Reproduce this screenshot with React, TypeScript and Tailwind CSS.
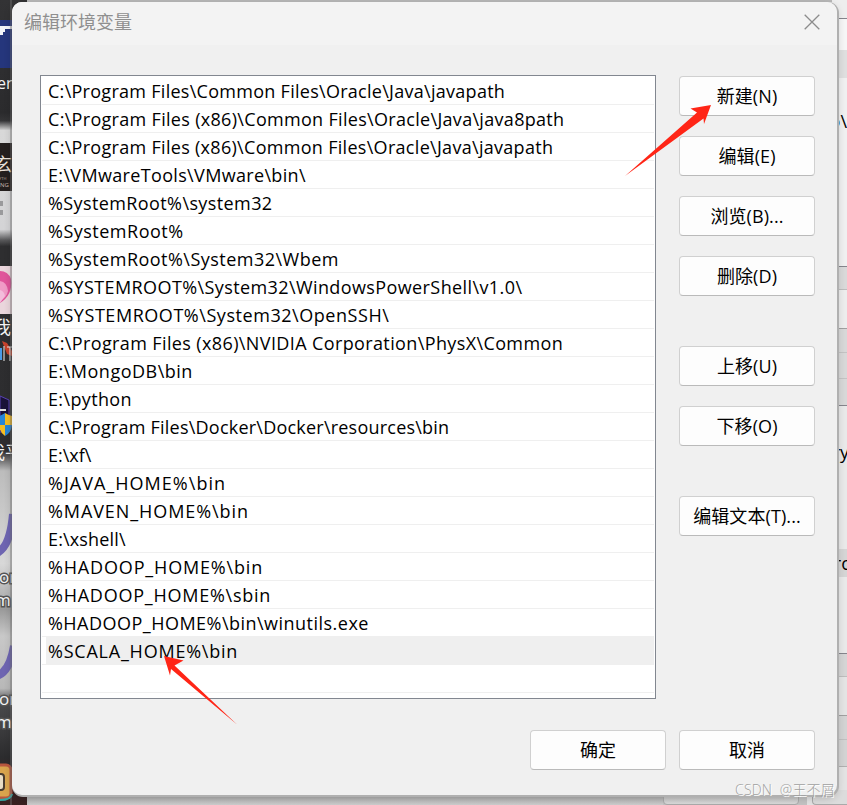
const paths = [
  { path: "C:\\Program Files\\Common Files\\Oracle\\Java\\javapath", tracking: 0.28 },
  { path: "C:\\Program Files (x86)\\Common Files\\Oracle\\Java\\java8path", tracking: 0.31 },
  { path: "C:\\Program Files (x86)\\Common Files\\Oracle\\Java\\javapath", tracking: 0.3 },
  { path: "E:\\VMwareTools\\VMware\\bin\\", tracking: 0.34 },
  { path: "%SystemRoot%\\system32", tracking: 0.4 },
  { path: "%SystemRoot%", tracking: 0.5 },
  { path: "%SystemRoot%\\System32\\Wbem", tracking: 0.48 },
  { path: "%SYSTEMROOT%\\System32\\WindowsPowerShell\\v1.0\\", tracking: 0.4 },
  { path: "%SYSTEMROOT%\\System32\\OpenSSH\\", tracking: 0.55 },
  { path: "C:\\Program Files (x86)\\NVIDIA Corporation\\PhysX\\Common", tracking: 0.38 },
  { path: "E:\\MongoDB\\bin", tracking: 0.5 },
  { path: "E:\\python", tracking: 0.36 },
  { path: "C:\\Program Files\\Docker\\Docker\\resources\\bin", tracking: 0.22 },
  { path: "E:\\xf\\", tracking: 0 },
  { path: "%JAVA_HOME%\\bin", tracking: 1.03 },
  { path: "%MAVEN_HOME%\\bin", tracking: 0.92 },
  { path: "E:\\xshell\\", tracking: 0.15 },
  { path: "%HADOOP_HOME%\\bin", tracking: 0.84 },
  { path: "%HADOOP_HOME%\\sbin", tracking: 0.76 },
  { path: "%HADOOP_HOME%\\bin\\winutils.exe", tracking: 0.48 },
  { path: "%SCALA_HOME%\\bin", tracking: 0.78 },
];

function Button({ children }: { children: string }) {
  return (
    <button className="flex h-10 w-[136px] shrink-0 items-center justify-center rounded-[4px] border border-[#d0d0d0] border-b-[#bababa] bg-[#fdfdfd] pb-px text-[18px] leading-none tracking-[0.1px] whitespace-pre">
      {children}
    </button>
  );
}

function Wallpaper() {
  return (
    <svg className="h-[805px] w-[27px] shrink-0" viewBox="0 0 27 805">
      <defs>
        <linearGradient id="desk" x1="0" y1="0" x2="0" y2="1">
          <stop offset="0" stopColor="#333335" />
          <stop offset="0.14" stopColor="#2b2b2d" />
          <stop offset="0.15" stopColor="#353537" />
          <stop offset="0.162" stopColor="#d8d8d8" />
          <stop offset="0.285" stopColor="#d4d4d6" />
          <stop offset="0.298" stopColor="#5a5a5c" />
          <stop offset="0.306" stopColor="#2e2e30" />
          <stop offset="0.56" stopColor="#2d2d2f" />
          <stop offset="0.585" stopColor="#bcbcbc" />
          <stop offset="0.7" stopColor="#d8d8d8" />
          <stop offset="0.74" stopColor="#b4b4b4" />
          <stop offset="0.757" stopColor="#9a9a9a" />
          <stop offset="0.79" stopColor="#c8c8c8" />
          <stop offset="0.855" stopColor="#b8b8b8" />
          <stop offset="0.873" stopColor="#4a4a4c" />
          <stop offset="0.94" stopColor="#2c2c2e" />
          <stop offset="1" stopColor="#3a2020" />
        </linearGradient>
      </defs>
      <rect width="27" height="805" fill="url(#desk)" />
      <rect y="20" width="12" height="48" fill="#25367c" />
      <path d="M0 26h12v3H5v3H3v3H0z" fill="#f2f4f8" />
      <text x="-3" y="89" fontSize="16" fill="#f4f4f4">er</text>
      <rect y="143" width="12" height="48" fill="#241f1e" />
      <text x="-6" y="171" fontSize="18" fill="#e8e0d8">玄</text>
      <text x="-1" y="180" fontSize="4" fill="#b8aaa0">YTH</text>
      <text x="0" y="187" fontSize="6" fill="#c8bab0">NG</text>
      <path d="M0 201h3v5H0zM0 210h3v5H0z" fill="#9a9a9c" />
      <rect y="266" width="12" height="48" fill="#ead6dc" />
      <path d="M0 271q8 0 11 8q2 16-11 24z" fill="#e0559b" />
      <path d="M0 281q7 1 8 10q-1 6-8 10z" fill="#f09bc6" />
      <path d="M0 290q4 1 5 6l-5 7z" fill="#f3bddb" />
      <text x="-7" y="334" fontSize="18" fill="#f4f4f4">我</text>
      <path d="M2 341l5 2 5 8v5L7 354z" fill="#c8432c" />
      <rect y="348" width="2" height="12" fill="#4a9be8" />
      <path d="M4 346v15M7 347h5M10 347v14" fill="none" stroke="#eee" />
      <path d="M0 396l9 4v32H0z" fill="#1a1238" stroke="#5942b4" />
      <path d="M0 410h6" stroke="#ddd" strokeWidth="2" />
      <path d="M5 413q3 2 7 3v9H5z" fill="#f5bd22" />
      <path d="M5 413q-3 2-6 3v9h6z" fill="#2686d8" />
      <path d="M5 425h7q-1 8-7 11z" fill="#2686d8" />
      <path d="M5 425v11q-5-3-6-11z" fill="#f5bd22" />
      <text x="-13" y="459" fontSize="18" fill="#f4f4f4">我平</text>
      <path d="M13 514q-3 33-16 39" fill="none" stroke="#6e65b1" strokeWidth="8" />
      <g fontSize="17" fill="#f4f4f4" stroke="#555" strokeWidth="3" paintOrder="stroke">
        <text x="-1" y="583">or</text>
        <text x="-5" y="606">m</text>
        <text x="-1" y="705">or</text>
        <text x="-4" y="728">m</text>
      </g>
      <path d="M14 646q-4 25-17 30" fill="none" stroke="#6e65b1" strokeWidth="8" />
      <rect x="-12" y="765" width="23" height="33" rx="5" fill="#d9a44d" stroke="#b8573f" strokeWidth="3" />
      <rect x="-7" y="774" width="11" height="16" rx="3" fill="#e8dcc4" stroke="#493c30" strokeWidth="2" />
      <path d="M0 800q11 0 12-6" fill="none" stroke="#35a6a0" strokeWidth="2" />
      <path d="M10 0h2v805h-2z" fill="#777" opacity="0.4" />
    </svg>
  );
}

function BackWindow() {
  return (
    <div className="flex min-w-0 flex-1 flex-col items-end bg-[#c3c3c3]">
      <div className="flex w-[40px] flex-1 flex-col text-right text-[18px] leading-[22px]">
        <div className="h-[19px] border-b border-[#85858c] bg-[#eeeeee]" />
        <div className="h-[31px] bg-[#f6f6f6]" />
        <div className="h-[28px] bg-[#dfdfdf]" />
        <div className="h-[189px] border-b border-[#85858c] bg-[#f0f0f0] pt-8">o\</div>
        <div className="h-[23px] border-b border-[#bdbdbd] bg-[#d9d9d9]" />
        <div className="h-[39px] border-b border-[#a0a0a0] bg-[#ededed]" />
        <div className="h-[24px] border-b border-[#c3c3c3] bg-[#d8d8d8]" />
        <div className="h-[26px] border-b border-[#c3c3c3] bg-[#d8d8d8]" />
        <div className="h-[27px] border-b border-[#85858c] bg-[#d8d8d8]" />
        <div className="h-[143px] bg-[#e9e9e9] pt-[35px]">
          <span className="-mr-[2px]">ry</span>
        </div>
        <div className="-mr-[5px] h-[28px] bg-[#d5d5d5] pt-[3px]">ro</div>
        <div className="h-[77px] border-b border-[#85858c] bg-[#e9e9e9]" />
        <div className="h-[23px] border-b border-[#bdbdbd] bg-[#d5d5d5]" />
        <div className="h-[39px] border-b border-[#a0a0a0] bg-[#e4e4e4]" />
        <div className="h-[24px] border-b border-[#c0c0c0] bg-[#d3d3d3]" />
        <div className="h-[27px] border-b border-[#b0b0b0] bg-[#d3d3d3]" />
        <div className="flex-1 bg-[#e3e3e3]" />
      </div>
    </div>
  );
}

export default function App() {
  return (
    <div className="relative flex h-[805px] w-[847px] overflow-hidden font-[Open_Sans,Noto_Sans_CJK_SC,sans-serif] text-black">
      <Wallpaper />
      <BackWindow />

      {/* edges of the window behind */}
      <div className="absolute top-0 left-[27px] h-[2px] w-[805px] bg-[#b8b8b8]" />
      <div className="absolute top-[795px] left-[27px] h-[10px] w-[636px] bg-linear-to-b from-[#a8a8a8] to-[#cdcdcd]" />
      <div className="absolute top-[790px] left-[663px] h-[15px] w-[136px] rounded-b-[4px] border border-[#aaa] bg-linear-to-b from-[#b4b4b4] to-[#dadada]" />
      <div className="absolute top-[790px] left-[812px] h-[15px] w-[35px] rounded-bl-[4px] border-b border-l border-[#aaa] bg-[#dcdcdc]" />

      <section className="absolute top-[2px] left-3 flex h-[793px] w-[825px] flex-col rounded-[10px] bg-[#f0f0f0] shadow-[1px_1px_0_1px_#b0b0b0,0_3px_8px_rgba(0,0,0,0.2)]">
        <header className="flex h-[43px] shrink-0 items-center justify-between rounded-t-[10px] bg-[#f3f3f3] pr-[17px] pl-3">
          <h1 className="pb-1 text-[18px] leading-none text-[#8f8f8f]">编辑环境变量</h1>
          <svg className="mb-[3px] h-4 w-4" viewBox="0 0 16 16" fill="none" stroke="#8c8c8c" strokeWidth="1.3">
            <path d="M.7.7l14.6 14.6M15.3.7L.7 15.3" />
          </svg>
        </header>

        <div className="flex pt-[30px] pl-7">
          <ul className="h-[624px] w-[616px] border border-[#828790] bg-white px-px text-[18px] leading-7 whitespace-pre">
            {paths.map(({ path, tracking }, i) => (
              <li key={path} className="h-7 border-b border-[#efefef] first:h-[29px] first:pt-px">
                <div
                  className={i === paths.length - 1 ? "ml-1 h-7 bg-[#efefef] pl-[2px]" : "h-7 pl-[6px]"}
                  style={{ letterSpacing: tracking }}
                >
                  {path}
                </div>
              </li>
            ))}
            <li className="h-7 border-b border-[#efefef]" />
          </ul>

          <div className="ml-[23px] flex flex-col gap-5 pt-px">
            <Button>新建(N)</Button>
            <Button>编辑(E)</Button>
            <Button>浏览(B)...</Button>
            <Button>删除(D)</Button>
            <div className="mt-[30px] flex flex-col gap-5">
              <Button>上移(U)</Button>
              <Button>下移(O)</Button>
            </div>
            <div className="mt-[30px]">
              <Button>编辑文本(T)...</Button>
            </div>
          </div>
        </div>

        <footer className="mt-[31px] flex justify-end gap-[13px] pr-[22px]">
          <Button>确定</Button>
          <Button>取消</Button>
        </footer>
      </section>

      {/* red pointer arrows */}
      <svg className="pointer-events-none absolute inset-0 h-full w-full" viewBox="0 0 847 805" fill="#ff2516">
        <path d="M711 105l-20.500 3.500 6.500 4L625 176l78.500-57.500L704 124z" />
        <path d="M164 656l19.500 4.500-9 5L237 724.500l-66-55.500-1 6.500z" />
      </svg>

      <span className="absolute top-[780px] left-[735px] text-[14px] leading-[20px] font-light tracking-[0.2px] whitespace-pre text-[#a0a0a0] [text-shadow:1px_1px_0_#fff]">
        CSDN  @王不屑
      </span>
    </div>
  );
}
